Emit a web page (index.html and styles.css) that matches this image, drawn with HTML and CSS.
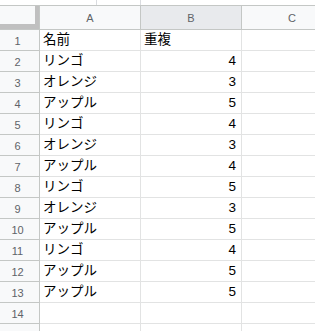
FILE: index.html
```html
<!DOCTYPE html>
<html lang="ja">
<head>
  <meta charset="UTF-8" />
  <meta name="viewport" content="width=device-width, initial-scale=1.0" />
  <title>Sheet</title>
  <link rel="stylesheet" href="styles.css">
</head>
<body>
  <div class="strip">
    <span class="strip-a"></span>
    <span class="strip-b"></span>
    <span class="strip-c"></span>
  </div>

  <div class="sheet">
    <div class="corner"></div>
    <div class="col-head">A</div>
    <div class="col-head active">B</div>
    <div class="col-head">C</div>

    <div class="row-head">1</div><div class="cell">名前</div><div class="cell">重複</div><div class="cell"></div>
    <div class="row-head">2</div><div class="cell">リンゴ</div><div class="cell num">4</div><div class="cell"></div>
    <div class="row-head">3</div><div class="cell">オレンジ</div><div class="cell num">3</div><div class="cell"></div>
    <div class="row-head">4</div><div class="cell">アップル</div><div class="cell num">5</div><div class="cell"></div>
    <div class="row-head">5</div><div class="cell">リンゴ</div><div class="cell num">4</div><div class="cell"></div>
    <div class="row-head">6</div><div class="cell">オレンジ</div><div class="cell num">3</div><div class="cell"></div>
    <div class="row-head">7</div><div class="cell">アップル</div><div class="cell num">4</div><div class="cell"></div>
    <div class="row-head">8</div><div class="cell">リンゴ</div><div class="cell num">5</div><div class="cell"></div>
    <div class="row-head">9</div><div class="cell">オレンジ</div><div class="cell num">3</div><div class="cell"></div>
    <div class="row-head">10</div><div class="cell">アップル</div><div class="cell num">5</div><div class="cell"></div>
    <div class="row-head">11</div><div class="cell">リンゴ</div><div class="cell num">4</div><div class="cell"></div>
    <div class="row-head">12</div><div class="cell">アップル</div><div class="cell num">5</div><div class="cell"></div>
    <div class="row-head">13</div><div class="cell">アップル</div><div class="cell num">5</div><div class="cell"></div>
    <div class="row-head">14</div><div class="cell"></div><div class="cell"></div><div class="cell"></div>
    <div class="row-head">15</div><div class="cell"></div><div class="cell"></div><div class="cell"></div>
  </div>
</body>
</html>
```

FILE: styles.css
```css
:root {
  --head-bg: #f8f9fa;
  --head-active: #e8eaed;
  --head-line: #c4c7c5;
  --grid-line: #e2e3e3;
  --head-text: #5f6368;
  --text: #000000;
}

html, body {
  margin: 0;
  padding: 0;
  background: #ffffff;
  overflow: hidden;
}

body {
  width: 315px;
  height: 331px;
  font-family: 'Liberation Sans', 'Noto Sans CJK JP', sans-serif;
}

/* bit of the toolbar row left above the grid */
.strip {
  display: flex;
  height: 6px;
  box-sizing: border-box;
  border-bottom: 1px solid var(--head-line);
}

.strip-a {
  width: 96px;
}

.strip-b {
  width: 44px;
  border-left: 1px solid #dadce0;
  box-sizing: border-box;
}

.strip-c {
  flex: 1;
  border-left: 1px solid #dadce0;
}

.sheet {
  display: grid;
  grid-template-columns: 40px 101px 101px 101px;
  grid-template-rows: 24px;
  grid-auto-rows: 21px;
}

.sheet > div {
  box-sizing: border-box;
  border-right: 1px solid var(--grid-line);
  border-bottom: 1px solid var(--grid-line);
}

.corner {
  background: var(--head-bg);
  box-shadow: inset -4px -5px 0 #c0c0c0;
  border-color: var(--head-line) !important;
}

.col-head {
  background: var(--head-bg);
  color: var(--head-text);
  font-size: 11px;
  display: flex;
  align-items: center;
  justify-content: center;
  padding-top: 1px;
  border-color: var(--head-line) !important;
}

.col-head.active {
  background: var(--head-active);
}

.row-head {
  background: var(--head-bg);
  color: var(--head-text);
  font-size: 11px;
  display: flex;
  align-items: center;
  justify-content: center;
  padding-right: 4px;
  padding-top: 1px;
  border-color: var(--head-line) !important;
}

.cell {
  color: var(--text);
  font-size: 13.5px;
  line-height: 16px;
  display: flex;
  align-items: flex-end;
  padding: 0 3px 2px 3px;
  white-space: nowrap;
}

.num {
  justify-content: flex-end;
  padding-right: 5px;
}
```
